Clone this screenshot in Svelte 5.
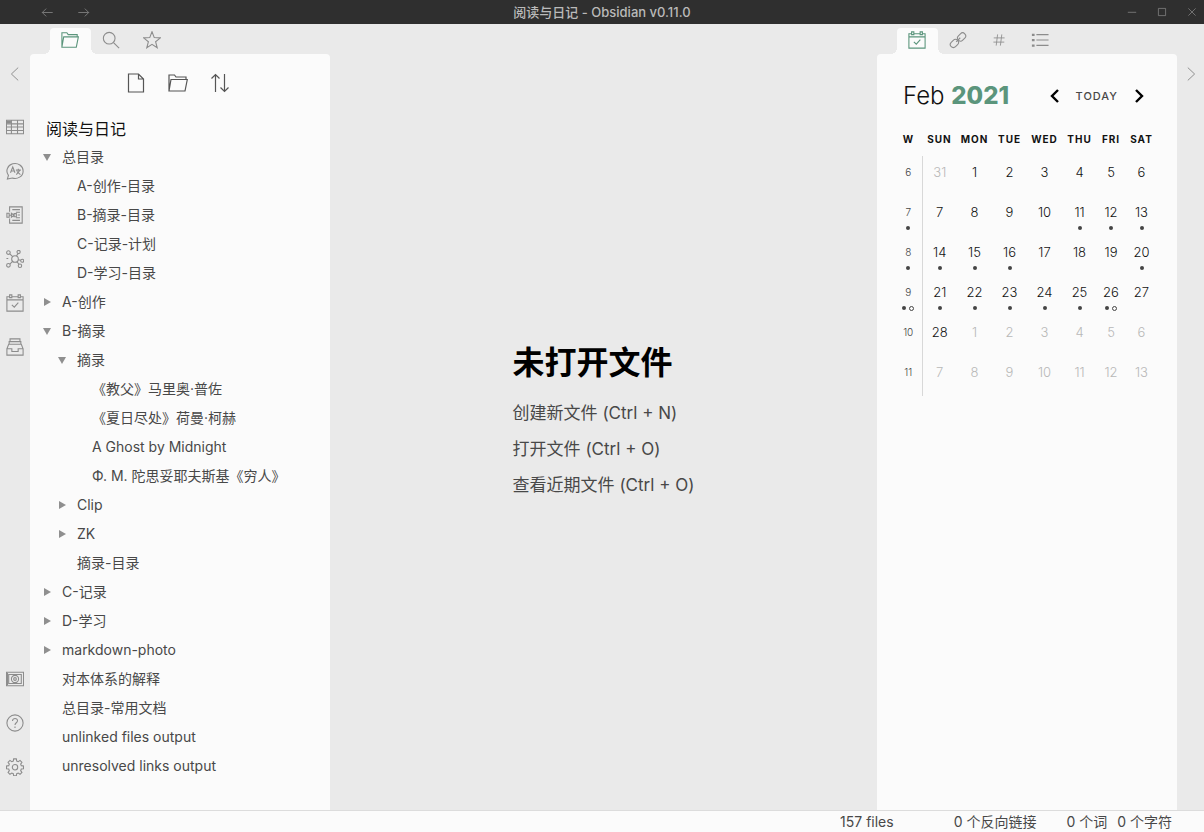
<script lang="ts">
    type TreeNode = { name: string; open?: boolean; folder?: boolean; children?: TreeNode[] };
    type Day = { n: number; other?: boolean; dots?: string };

    const vault = '阅读与日记';

    const tree: TreeNode[] = [
        {
            name: '总目录', folder: true, open: true,
            children: [
                { name: 'A-创作-目录' },
                { name: 'B-摘录-目录' },
                { name: 'C-记录-计划' },
                { name: 'D-学习-目录' },
            ],
        },
        { name: 'A-创作', folder: true },
        {
            name: 'B-摘录', folder: true, open: true,
            children: [
                {
                    name: '摘录', folder: true, open: true,
                    children: [
                        { name: '《教父》马里奥·普佐' },
                        { name: '《夏日尽处》荷曼·柯赫' },
                        { name: 'A Ghost by Midnight' },
                        { name: 'Ф. М. 陀思妥耶夫斯基《穷人》' },
                    ],
                },
                { name: 'Clip', folder: true },
                { name: 'ZK', folder: true },
                { name: '摘录-目录' },
            ],
        },
        { name: 'C-记录', folder: true },
        { name: 'D-学习', folder: true },
        { name: 'markdown-photo', folder: true },
        { name: '对本体系的解释' },
        { name: '总目录-常用文档' },
        { name: 'unlinked files output' },
        { name: 'unresolved links output' },
    ];

    const weekdays = ['SUN', 'MON', 'TUE', 'WED', 'THU', 'FRI', 'SAT'];
    // 'f' is a filled dot, 'o' a hollow one (open tasks)
    const dayDots: Record<number, string> = {
        11: 'f', 12: 'f', 13: 'f', 14: 'f', 15: 'f', 16: 'f', 20: 'f',
        21: 'f', 22: 'f', 23: 'f', 24: 'f', 25: 'f', 26: 'fo',
    };
    const weekDots: Record<number, string> = { 7: 'f', 8: 'f', 9: 'fo' };

    function dayAt(offset: number): Day {
        if (offset < 1) return { n: 31 + offset, other: true };
        if (offset > 28) return { n: offset - 28, other: true };
        return { n: offset, dots: dayDots[offset] };
    }

    const weeks = [6, 7, 8, 9, 10, 11].map((num, row) => ({
        num,
        dots: weekDots[num],
        days: weekdays.map((_, col) => dayAt(row * 7 + col)),
    }));

    const ribbonTop = [
        ['table', '表格'], ['translate', '翻译'], ['template', '模板'],
        ['graph', '关系图谱'], ['calendar', '日记'], ['archive', '归档'],
    ];
    const ribbonBottom = [['vault', '打开其他库'], ['help', '帮助'], ['gear', '设置']];
    const leftTabs = [['folder', '文件列表'], ['search', '搜索'], ['star', '星标']];
    const rightTabs = [['calendar', '日历'], ['link', '反向链接'], ['hash', '标签'], ['list', '大纲']];
    const navActions = [['file', '新建文件'], ['folder', '新建文件夹'], ['sort', '排序']];
    const emptyActions = ['创建新文件 (Ctrl + N)', '打开文件 (Ctrl + O)', '查看近期文件 (Ctrl + O)'];
</script>

{#snippet icon(name: string, size: number)}
    <svg class="icon" width={size} height={size} viewBox="0 0 20 20" aria-hidden="true">
        {#if name === 'folder'}
            <path d="M1 18V2h5.500l1.500 2h10v3M1 18L3 6.500h16.300L17 18z" />
        {:else if name === 'file'}
            <path d="M2.500 1h10l5 5v13h-15zM12.500 1v5h5" />
        {:else if name === 'search'}
            <circle cx="8" cy="8" r="6.500" /><path d="M12.800 12.800L19 19" />
        {:else if name === 'star'}
            <path d="M10 .8l2.500 6.500 6.900.3-5.400 4.300 1.800 6.700L10 14.800l-5.800 3.800L6 11.900.6 7.600l6.900-.3z" />
        {:else if name === 'sort'}
            <path d="M5.500 19V1.500M1.500 5.500l4-4 4 4M14.500 1v17.500M10.500 14.500l4 4 4-4" />
        {:else if name === 'table'}
            <path d="M.5 2.500h19v15H.5zM.5 6.500h19M.5 10h19M.5 13.800h19M6 2.500v15M12.800 2.500v15" />
            <path class="solid" d="M1 3h4.500v3H1z" />
        {:else if name === 'translate'}
            <path d="M1.500 19l1.200-4.200A9 8.300 0 1 1 7 17.800zM5 12l2.500-6.500L10 12M5.800 10h3.400M11 9h5.500M13.700 7.500V9M15.500 9l-4 5M12 10.500l4 3.500" />
        {:else if name === 'template'}
            <path d="M4 6.500V1h14v18H4v-5M7 4h8.500M11 7h4.500M13 10h2.500M11 13h4.500M7 16h8.500" />
            <path d="M1 8v4.500h2.500V8zM3.500 10.200H6M6 8l3 2.200-3 2.300zM9 8.500h2.500V12H9z" />
        {:else if name === 'graph'}
            <circle cx="10" cy="10" r="3.700" /><circle cx="2.700" cy="2.900" r="2" /><circle cx="14" cy="2.200" r="1.800" />
            <circle cx="18" cy="12" r="1.700" /><circle cx="2.700" cy="17" r="2" /><circle cx="15.500" cy="17.500" r="1.900" />
            <path d="M4.200 4.300l3.200 3M13.300 4l-1.700 2.700M13.600 10.800l2.700.7M4.200 15.600l3.200-3M12.300 13l2.100 2.900M.5 9.500h2" />
        {:else if name === 'calendar'}
            <path d="M1 3h18v16H1zM1 6.500h18M6.500 12l2.700 2.700 4.500-5" />
            <path class="panel-fill" d="M4 1h2.500v3H4zM13.500 1H16v3h-2.500z" />
        {:else if name === 'archive'}
            <path d="M4.500 4V1h11v3M3.500 7V4h13v3M1 12l2-5h14l2 5v7H1zM1 12h5.500v3h7v-3H19" />
        {:else if name === 'vault'}
            <path d="M.5 2.500h19v15H.5zM3 5h14v10H3z" />
            <path d="M1.700 3v14" />
            <circle cx="10" cy="10" r="4" /><circle cx="10" cy="10" r="1.500" />
        {:else if name === 'help'}
            <circle cx="10" cy="10" r="9" />
            <path d="M7.200 7.800c0-3.800 5.800-3.600 5.600-.2-.1 2.200-2.800 2.100-2.800 4.600M10 14v1.500" />
        {:else if name === 'gear'}
            <path d="M8.500 1h3l.4 2.400 1.700.7 2-1.400 2.100 2.100-1.400 2 .7 1.700 2.400.4v3l-2.400.4-.7 1.700 1.400 2-2.100 2.100-2-1.400-1.700.7-.4 2.400h-3l-.4-2.400-1.700-.7-2 1.400L2.300 16l1.400-2-.7-1.700-2.400-.4v-3L3 8.500l.7-1.700-1.400-2 2.100-2.100 2 1.400 1.700-.7z" />
            <circle cx="10" cy="10.300" r="3" />
        {:else if name === 'link'}
            <rect x="9" y="3.200" width="10" height="6.800" rx="3.400" transform="rotate(-45 14 6.600)" />
            <rect x="1" y="10.500" width="10" height="6.800" rx="3.400" transform="rotate(-45 6 13.900)" />
            <path d="M8 12l4.500-4.500" />
        {:else if name === 'hash'}
            <path d="M8 2L6 18M14 2l-2 16M2.500 7H18M2 13h15.500" />
        {:else if name === 'list'}
            <path d="M6 4h13.500M6 10h13.500M6 16h13.500" />
            <path class="solid" d="M1 3h3v2.500H1zM1 9h3v2.500H1zM1 15h3v2.500H1z" />
        {:else if name === 'back'}
            <path d="M18 10H2M8 4l-6 6 6 6" />
        {:else if name === 'forward'}
            <path d="M2 10h16M12 4l6 6-6 6" />
        {:else if name === 'chevron-left'}
            <path d="M14 2l-8.500 8 8.500 8" />
        {:else if name === 'chevron-right'}
            <path d="M6 2l8.500 8L6 18" />
        {:else if name === 'minimize'}
            <path d="M3 10.500h14" />
        {:else if name === 'maximize'}
            <path d="M4 4h12v12H4z" />
        {:else if name === 'close'}
            <path d="M4 4l12 12M16 4L4 16" />
        {/if}
    </svg>
{/snippet}

{#snippet nodes(items: TreeNode[])}
    <ul class="tree">
        {#each items as node}
            <li>
                <button class="row" aria-expanded={node.folder ? !!node.open : undefined}>
                    <span class="toggle">
                        {#if node.folder}
                            <svg width="8" height="8" viewBox="0 0 8 8" aria-hidden="true">
                                {#if node.open}
                                    <path d="M0 1h8L4 8z" />
                                {:else}
                                    <path d="M1 0v8l7-4z" />
                                {/if}
                            </svg>
                        {/if}
                    </span>
                    <span class="name">{node.name}</span>
                </button>
                {#if node.open && node.children}
                    {@render nodes(node.children)}
                {/if}
            </li>
        {/each}
    </ul>
{/snippet}

{#snippet dots(kinds: string | undefined)}
    <span class="dots">
        {#each kinds ?? '' as kind}
            <span class="dot" class:hollow={kind === 'o'}></span>
        {/each}
    </span>
{/snippet}

{#snippet tabs(items: string[][])}
    <div class="tabs" role="tablist">
        {#each items as [name, label], i}
            <button class="tab" class:active={i === 0} role="tab" aria-selected={i === 0} aria-label={label}>
                {@render icon(name, name === 'hash' ? 14 : 18)}
            </button>
        {/each}
    </div>
{/snippet}

<div class="app">
    <header class="titlebar">
        <div class="history">
            <button aria-label="后退">{@render icon('back', 13)}</button>
            <button aria-label="前进">{@render icon('forward', 13)}</button>
        </div>
        <div class="title">{vault} - Obsidian v0.11.0</div>
        <div class="window-buttons">
            <button aria-label="最小化">{@render icon('minimize', 12)}</button>
            <button aria-label="最大化">{@render icon('maximize', 12)}</button>
            <button aria-label="关闭">{@render icon('close', 12)}</button>
        </div>
    </header>

    <div class="workspace">
        <nav class="ribbon">
            <button class="collapse" aria-label="折叠">{@render icon('chevron-left', 16)}</button>
            <div class="ribbon-group">
                {#each ribbonTop as [name, label]}
                    <button aria-label={label}>{@render icon(name, 18)}</button>
                {/each}
            </div>
            <div class="ribbon-group bottom">
                {#each ribbonBottom as [name, label]}
                    <button aria-label={label}>{@render icon(name, 18)}</button>
                {/each}
            </div>
        </nav>

        <aside class="side">
            {@render tabs(leftTabs)}
            <div class="pane">
                <div class="nav-actions">
                    {#each navActions as [name, label]}
                        <button aria-label={label}>{@render icon(name, 20)}</button>
                    {/each}
                </div>
                <div class="vault-name">{vault}</div>
                <div class="files">
                    {@render nodes(tree)}
                </div>
            </div>
        </aside>

        <main class="empty">
            <div class="empty-inner">
                <h1>未打开文件</h1>
                {#each emptyActions as action}
                    <button>{action}</button>
                {/each}
            </div>
        </main>

        <aside class="side">
            {@render tabs(rightTabs)}
            <div class="pane calendar">
                <div class="month-bar">
                    <h2>Feb <span>2021</span></h2>
                    <div class="month-nav">
                        <button aria-label="上个月">
                            <svg width="10" height="14" viewBox="0 0 10 14" aria-hidden="true"><path d="M8 1L2 7l6 6" /></svg>
                        </button>
                        <button class="today">TODAY</button>
                        <button aria-label="下个月">
                            <svg width="10" height="14" viewBox="0 0 10 14" aria-hidden="true"><path d="M2 1l6 6-6 6" /></svg>
                        </button>
                    </div>
                </div>
                <table>
                    <thead>
                        <tr>
                            <th class="col-week">W</th>
                            {#each weekdays as day}
                                <th class="col-{day.toLowerCase()}">{day}</th>
                            {/each}
                        </tr>
                    </thead>
                    <tbody>
                        {#each weeks as week}
                            <tr>
                                <td class="week-num">
                                    <span class="num">{week.num}</span>
                                    {@render dots(week.dots)}
                                </td>
                                {#each week.days as day}
                                    <td class:other={day.other}>
                                        <span class="num">{day.n}</span>
                                        {@render dots(day.dots)}
                                    </td>
                                {/each}
                            </tr>
                        {/each}
                    </tbody>
                </table>
            </div>
        </aside>

        <div class="ribbon right">
            <button class="collapse" aria-label="折叠">{@render icon('chevron-right', 16)}</button>
        </div>
    </div>

    <footer class="status">
        <span class="files-count">157 files</span>
        <span class="backlinks">0 个反向链接</span>
        <span class="counts"><span>0 个词</span><span>0 个字符</span></span>
    </footer>
</div>

<style>
    :global(body) {
        margin: 0;
    }

    .app {
        --bg: #eaeaea;
        --panel: #fbfbfb;
        --text: #484848;
        --muted: #8c8c8c;
        --accent: #5b957c;
        display: flex;
        flex-direction: column;
        min-height: 100vh;
        background: var(--bg);
        color: var(--text);
        font-family: Inter, 'Noto Sans CJK SC', sans-serif;
        font-size: 14px;
        font-weight: 400;
    }

    button {
        display: flex;
        align-items: center;
        justify-content: center;
        padding: 0;
        border: none;
        background: none;
        color: inherit;
        font: inherit;
        cursor: pointer;
    }

    .icon {
        display: block;
        fill: none;
        stroke: currentColor;
        stroke-width: 1.2;
    }
    .icon .solid {
        fill: currentColor;
        stroke: none;
    }
    .icon .panel-fill {
        fill: var(--panel);
    }
    .ribbon .icon .panel-fill {
        fill: var(--bg);
    }

    .titlebar {
        display: grid;
        grid-template-columns: 1fr auto 1fr;
        align-items: center;
        height: 24px;
        background: #2f2f2f;
        color: #8a8a8a;
    }
    .titlebar button {
        width: 24px;
        height: 24px;
    }
    .history {
        display: flex;
        gap: 12px;
        padding-left: 35px;
    }
    .title {
        color: #bababa;
        font-size: 13px;
        font-weight: 500;
        line-height: 24px;
    }
    .window-buttons {
        display: flex;
        justify-content: flex-end;
        gap: 6px;
    }

    .workspace {
        display: flex;
        flex: 1;
    }

    .ribbon {
        display: flex;
        flex-direction: column;
        width: 30px;
        color: var(--muted);
    }
    .ribbon.right {
        width: 27px;
    }
    .ribbon button {
        width: 100%;
        height: 44px;
    }
    .ribbon .collapse {
        margin-top: 28px;
        margin-bottom: 9px;
    }
    .ribbon-group.bottom {
        margin-top: auto;
        padding-bottom: 21px;
    }

    .side {
        display: flex;
        flex-direction: column;
        width: 300px;
    }

    .tabs {
        display: flex;
        height: 30px;
        padding: 4px 20px 0;
        box-sizing: border-box;
        color: var(--muted);
    }
    .tab {
        position: relative;
        width: 41px;
        height: 26px;
        padding: 0 1px 2px 0;
        box-sizing: border-box;
    }
    .tab.active {
        background: var(--panel);
        border-radius: 4px 4px 0 0;
        color: var(--accent);
    }
    .tab.active::before,
    .tab.active::after {
        content: '';
        position: absolute;
        bottom: 0;
        width: 6px;
        height: 6px;
    }
    .tab.active::before {
        right: 100%;
        background: radial-gradient(circle at 0 0, transparent 6px, var(--panel) 6px);
    }
    .tab.active::after {
        left: 100%;
        background: radial-gradient(circle at 100% 0, transparent 6px, var(--panel) 6px);
    }

    .pane {
        flex: 1;
        background: var(--panel);
        border-radius: 4px 4px 0 0;
    }

    .nav-actions {
        display: flex;
        align-items: center;
        justify-content: center;
        gap: 22px;
        height: 60px;
        padding: 0 4px 2px 0;
        box-sizing: border-box;
        color: #555;
    }
    .vault-name {
        height: 28px;
        padding-left: 16px;
        color: #111;
        font-size: 16px;
        line-height: 30px;
    }
    .files {
        padding-left: 11px;
    }

    .tree {
        margin: 0;
        padding: 0;
        list-style: none;
    }
    .tree .tree {
        padding-left: 15px;
    }
    .row {
        justify-content: flex-start;
        gap: 9px;
        width: 100%;
        height: 29px;
        line-height: 29px;
        text-align: left;
    }
    .toggle {
        display: flex;
        justify-content: center;
        width: 12px;
    }
    .toggle svg {
        fill: #8f8f8f;
    }
    .name {
        white-space: nowrap;
    }

    .empty {
        display: flex;
        flex: 1;
        align-items: center;
        justify-content: center;
    }
    .empty h1 {
        margin: 0;
        color: #000;
        font-size: 32px;
        font-weight: 700;
        line-height: 64px;
    }
    .empty button {
        height: 36px;
        font-size: 17px;
        line-height: 36px;
    }

    .calendar {
        padding: 21px 19px 0 18px;
    }
    .month-bar {
        display: flex;
        align-items: center;
        justify-content: space-between;
        height: 41px;
        padding: 0 14px 0 8px;
    }
    .month-bar h2 {
        margin: 0;
        color: #111;
        font-size: 24px;
        font-weight: 300;
    }
    .month-bar h2 span {
        color: var(--accent);
        font-weight: 800;
    }
    .month-nav {
        display: flex;
        align-items: center;
        gap: 16px;
    }
    .month-nav svg {
        fill: none;
        stroke: #000;
        stroke-width: 2.4;
    }
    .today {
        font-size: 11px;
        font-weight: 500;
        letter-spacing: 1px;
    }

    table {
        width: 100%;
        border-collapse: collapse;
        table-layout: fixed;
    }
    th,
    td {
        padding: 0;
        text-align: center;
    }
    th {
        width: 35px;
        height: 40px;
        padding-top: 6px;
        box-sizing: border-box;
        color: #111;
        font-size: 10px;
        font-weight: 700;
        letter-spacing: 1px;
        vertical-align: middle;
    }
    .col-week {
        width: 27px;
    }
    .col-fri {
        width: 28px;
    }
    .col-sat {
        width: 33px;
    }
    td {
        height: 40px;
        color: #111;
        font-size: 13px;
        font-weight: 300;
        vertical-align: top;
    }
    td.other {
        color: #b8b8b8;
    }
    td.week-num {
        border-right: 1px solid #d8d8d8;
        color: #444;
        font-size: 10px;
    }
    .num {
        display: block;
        padding-top: 8px;
        line-height: 16px;
    }
    .dots {
        display: flex;
        align-items: center;
        justify-content: center;
        gap: 3px;
        height: 16px;
    }
    .dot {
        width: 4px;
        height: 4px;
        border-radius: 50%;
        background: #444;
    }
    .dot.hollow {
        width: 5px;
        height: 5px;
        box-sizing: border-box;
        border: 1px solid #444;
        background: none;
    }

    .status {
        display: flex;
        align-items: center;
        justify-content: flex-end;
        height: 21px;
        padding-right: 32px;
        border-top: 1px solid #dcdcdc;
        background: var(--panel);
        line-height: 21px;
    }
    .files-count {
        margin-right: 60px;
    }
    .backlinks {
        margin-right: 30px;
    }
    .counts {
        display: flex;
        gap: 10px;
    }
</style>
